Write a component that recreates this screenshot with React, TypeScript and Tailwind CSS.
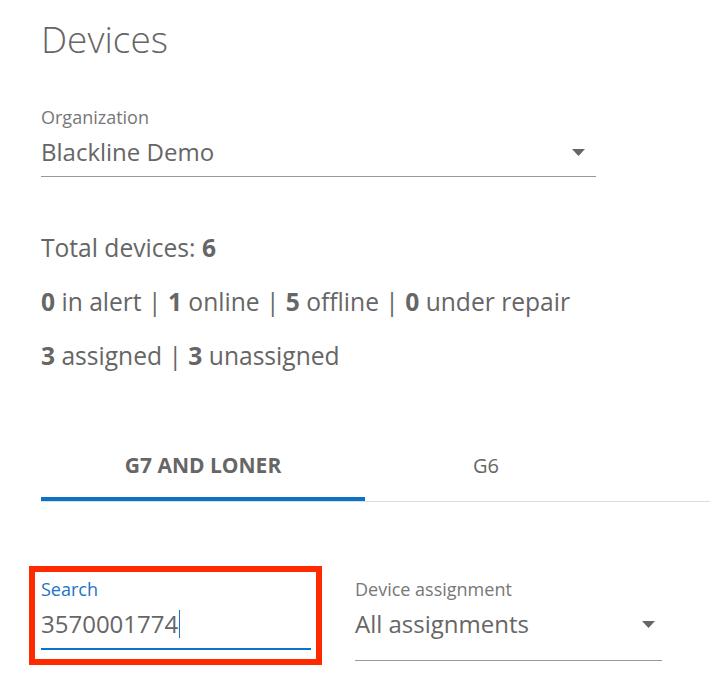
import React from "react";

const FONT = { fontFamily: '"Open Sans", "Noto Sans", sans-serif' };

function Caret() {
  return <svg width="13" height="7" viewBox="0 0 13 7" className="shrink-0"><path d="M0 0h13L6.5 7z" fill="#666" /></svg>;
}

export default function App() {
  return (
    <div className="min-h-[698px] w-[710px] overflow-hidden bg-white pl-[41px] pt-[17px] text-[#666]" style={FONT}>
      <h1 className="text-[37px] leading-[44px] font-light">Devices</h1>

      <div className="mt-[44px] w-[555px]">
        <div className="text-[18px] leading-[24px] text-[#777]">Organization</div>
        <div className="mt-[7px] flex items-center justify-between border-b border-[#999] pb-[8px] pr-[11px]">
          <span className="text-[24px] leading-[32px]">Blackline Demo</span>
          <Caret />
        </div>
      </div>

      <div className="mt-[44px] text-[24.6px] leading-[54px]">
        <div>Total devices: <b className="font-bold">6</b></div>
        <div>
          <b className="font-bold">0</b> in alert | <b className="font-bold">1</b> online | <b className="font-bold">5</b> offline | <b className="font-bold">0</b> under repair
        </div>
        <div>
          <b className="font-bold">3</b> assigned | <b className="font-bold">3</b> unassigned
        </div>
      </div>

      <div className="mt-[48px] flex border-b border-[#ddd]">
        <button className="flex h-[70px] w-[324px] items-center justify-center border-b-4 border-[#0b72c8] pt-[4px] text-[21px] font-bold uppercase">
          G7 and Loner
        </button>
        <button className="flex h-[70px] w-[242px] items-center justify-center border-b-4 border-transparent pt-[4px] text-[20px] font-normal uppercase">
          G6
        </button>
      </div>

      <div className="-ml-[12px] mt-[64px] flex items-start gap-[33px]">
        <div className="w-[293px] border-[6px] border-[#ff2a00] pb-[9px] pl-[6px] pr-[5px] pt-[5px]">
          <div className="text-[18px] leading-[24px] text-[#1a73c9]">Search</div>
          <div className="mt-[7px] flex items-center border-b-2 border-[#0b72c8] pb-[8px]">
            <span className="text-[24px] leading-[32px]">3570001774</span>
            <span className="ml-px inline-block h-[28px] w-px bg-[#1a73c9]" />
          </div>
        </div>
        <div className="w-[307px] pt-[11px]">
          <div className="text-[18px] leading-[24px] text-[#777]">Device assignment</div>
          <div className="mt-[7px] flex items-center justify-between border-b border-[#999] pb-[20px] pr-[7px]">
            <span className="text-[24px] leading-[32px]">All assignments</span>
            <Caret />
          </div>
        </div>
      </div>
    </div>
  );
}
